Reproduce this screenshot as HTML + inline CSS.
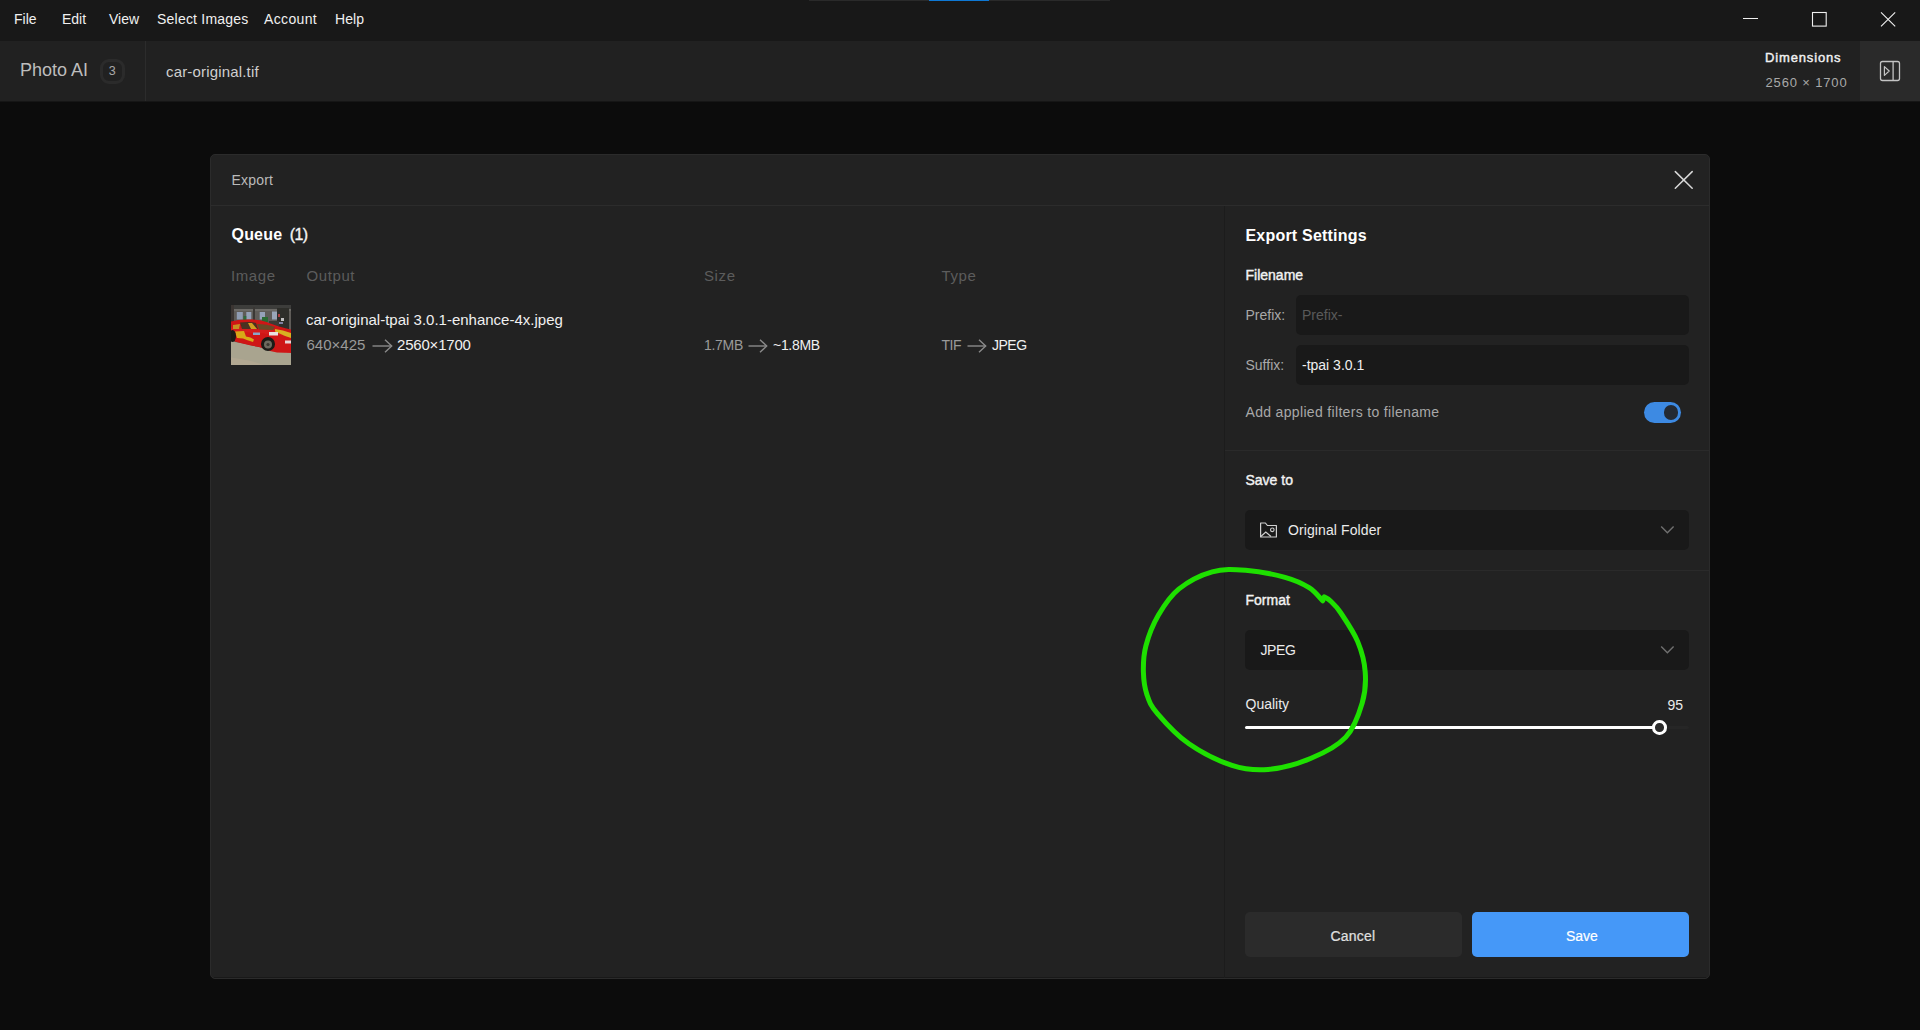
<!DOCTYPE html>
<html><head><meta charset="utf-8">
<style>
*{margin:0;padding:0;box-sizing:border-box}
html,body{width:1920px;height:1030px;overflow:hidden;background:#0c0c0c;font-family:"Liberation Sans",sans-serif;position:relative}
.t{position:absolute;white-space:nowrap;line-height:normal}
.a{position:absolute}
svg{display:block}
</style></head><body>
<div style="position:absolute;left:0;top:0;width:1920px;height:41px;background:#181818"></div>
<div class="t" style="left:14px;top:10.63px;font-size:14px;color:#f0f0f0;">File</div>
<div class="t" style="left:62px;top:10.63px;font-size:14px;color:#f0f0f0;">Edit</div>
<div class="t" style="left:109px;top:10.63px;font-size:14px;color:#f0f0f0;">View</div>
<div class="t" style="left:157px;top:10.63px;font-size:14px;color:#f0f0f0;letter-spacing:0.22px;">Select Images</div>
<div class="t" style="left:264px;top:10.63px;font-size:14px;color:#f0f0f0;letter-spacing:0.35px;">Account</div>
<div class="t" style="left:335px;top:10.63px;font-size:14px;color:#f0f0f0;letter-spacing:0.1px;">Help</div>
<div style="position:absolute;left:809px;top:0;width:301px;height:1px;background:#2a2a2a"></div>
<div style="position:absolute;left:929px;top:0;width:60px;height:1px;background:#0e78d4"></div>
<svg style="position:absolute;left:1740px;top:8px" width="160" height="24" viewBox="1740 8 160 24"><path d="M1743,18.5 H1758" stroke="#f0f0f0" stroke-width="1"/><rect x="1812.5" y="12.5" width="13.7" height="13.6" stroke="#f0f0f0" stroke-width="1.1" fill="none"/><path d="M1881,12.3 L1895.2,26.3 M1895.2,12.3 L1881,26.3" stroke="#f0f0f0" stroke-width="1.1"/></svg>
<div style="position:absolute;left:0;top:41px;width:1920px;height:60px;background:#212121"></div>
<div style="position:absolute;left:0;top:101px;width:1920px;height:1px;background:#161616"></div>
<div class="t" style="left:20px;top:60.41px;font-size:18px;color:#bdbdbd;">Photo AI</div>
<div style="position:absolute;left:100px;top:58.5px;width:25px;height:25.5px;border:3px solid #2b2b2b;border-radius:9px"></div>
<div class="t" style="left:108.8px;top:63.79px;font-size:12.5px;color:#a8a8a8;">3</div>
<div style="position:absolute;left:145px;top:41px;width:1px;height:60px;background:#2c2c2c"></div>
<div class="t" style="left:166px;top:62.67px;font-size:15px;color:#cfcfcf;letter-spacing:0.17px;">car-original.tif</div>
<div class="t" style="left:1765px;top:50.13px;font-size:13px;color:#f2f2f2;-webkit-text-stroke:0.4px #f2f2f2;letter-spacing:0.85px;">Dimensions</div>
<div class="t" style="left:1765.5px;top:75.14px;font-size:13px;color:#a9a9a9;letter-spacing:0.85px;">2560 × 1700</div>
<div style="position:absolute;left:1860px;top:41px;width:60px;height:60px;background:#2a2a2a"></div>
<svg style="position:absolute;left:1876px;top:57px" width="28" height="28" viewBox="1876 57 28 28"><rect x="1880.5" y="61.5" width="19" height="19" rx="2" stroke="#c4c4c4" stroke-width="1.3" fill="none"/><path d="M1893.1,61.5 V80.5" stroke="#c4c4c4" stroke-width="1.3"/><path d="M1884.4,66.6 L1889.2,71 L1884.4,75.4 Z" stroke="#c4c4c4" stroke-width="1.2" fill="none" stroke-linejoin="round"/></svg>
<div style="position:absolute;left:210px;top:154px;width:1500px;height:825px;background:#222222;border:1px solid #2b2b2b;border-radius:5px"></div>
<div style="position:absolute;left:214px;top:977px;width:1492px;height:1px;background:#191919"></div>
<div class="t" style="left:231.5px;top:172.23px;font-size:14px;color:#bababa;letter-spacing:0.2px;">Export</div>
<svg style="position:absolute;left:1670px;top:166px" width="28" height="28" viewBox="1670 166 28 28"><path d="M1675.3,171.6 L1692.2,188.3 M1692.2,171.6 L1675.3,188.3" stroke="#d8d8d8" stroke-width="1.5" stroke-linecap="round"/></svg>
<div style="position:absolute;left:211px;top:205px;width:1498px;height:1px;background:#2c2c2c"></div>
<div style="position:absolute;left:1224px;top:206px;width:1px;height:772px;background:#1c1c1c"></div>
<div class="t" style="left:231.5px;top:225.92px;font-size:16px;color:#ffffff;font-weight:700;letter-spacing:0.2px;">Queue</div>
<div class="t" style="left:289.8px;top:225.92px;font-size:16px;color:#f4f4f4;-webkit-text-stroke:0.35px #f4f4f4;letter-spacing:-0.6px;">(1)</div>
<div class="t" style="left:231px;top:267.43px;font-size:15px;color:#5c5c5c;letter-spacing:0.6px;">Image</div>
<div class="t" style="left:306.5px;top:267.43px;font-size:15px;color:#5c5c5c;letter-spacing:0.6px;">Output</div>
<div class="t" style="left:704px;top:267.43px;font-size:15px;color:#5c5c5c;letter-spacing:0.6px;">Size</div>
<div class="t" style="left:941.5px;top:267.43px;font-size:15px;color:#5c5c5c;letter-spacing:0.6px;">Type</div>
<svg style="position:absolute;left:231px;top:305px" width="60" height="60" viewBox="0 0 60 60"><defs><filter id="bl" x="-5%" y="-5%" width="110%" height="110%"><feGaussianBlur stdDeviation="0.6"/></filter><clipPath id="cp"><rect width="60" height="60"/></clipPath></defs><g clip-path="url(#cp)"><g filter="url(#bl)"><rect x="-2" y="-2" width="64" height="64" fill="#5e5c58"/><rect x="-2" y="-2" width="64" height="6" fill="#3e3c3a"/><rect x="-2" y="4" width="64" height="2" fill="#6c6a66"/><rect x="0" y="0" width="3" height="20" fill="#3a3532"/><rect x="22" y="2" width="2" height="14" fill="#3a3836"/><rect x="5.8" y="7" width="6" height="7.5" fill="#8f9cb2"/><rect x="15.3" y="7" width="5" height="7.5" fill="#95a2b8"/><rect x="28.7" y="7" width="5.3" height="7.5" fill="#95a2b8"/><rect x="41" y="6.5" width="5" height="8" fill="#9aa6b8"/><rect x="12.5" y="11" width="2.8" height="5" fill="#2f6a3a"/><rect x="31" y="12" width="6" height="5" fill="#2a6a30"/><rect x="46" y="3" width="12" height="21" fill="#2e2e2c"/><rect x="47" y="9" width="2" height="3" fill="#b04040"/><rect x="50" y="13" width="3" height="3" fill="#c0c0c0"/><rect x="48" y="17" width="4" height="2" fill="#8080a0"/><rect x="38" y="16" width="10" height="5" fill="#3a3a36"/><path d="M-2,36 L10,38 L30,42.5 L60,47 L62,47 V62 H-2 Z" fill="#a9a48f"/><path d="M-2,52 L20,56 L40,62 H-2 Z" fill="#b2a892"/><path d="M0,16.5 Q8,14 22,14.5 Q32,15 38,18 L48,21.5 Q56,23.5 62,25 V48 L46,47.5 Q40,47 34,44 L28,42 Q12,39 4,36.5 L0,35 Z" fill="#cf1414"/><path d="M0,22 Q20,24 40,25 L62,28 V32 Q40,29 20,28 L0,27 Z" fill="#d82020" opacity="0.6"/><path d="M9,17.5 Q20,16.5 25,18 L27,24 L11,24 Z" fill="#4a3020"/><path d="M17,18 L21,18 L26,24 L20,24 Z" fill="#d0a020"/><path d="M26,19 Q36,19 44,22 L42,25 L28,24.5 Z" fill="#6a4a28"/><path d="M2,20 L9,19 L8,24 L2,24 Z" fill="#c89020"/><path d="M4,26.5 L13,26 L15,31.5 Q20,32 23,34.5 L22,37 Q16,35 12,33.5 L6,33 Z" fill="#d8a818"/><path d="M44,24 Q52,25 60,28 L60,33 L54,31 Q48,28 44,26.5 Z" fill="#d8b020"/><rect x="38" y="27" width="9" height="3.5" fill="#e8e0e0"/><rect x="54" y="35.5" width="6" height="3" fill="#e6d6d6"/><rect x="22" y="27.5" width="7" height="2.5" fill="#8aa6c8"/><circle cx="37" cy="39" r="7" fill="#1c1a18"/><circle cx="37" cy="39.5" r="4" fill="#6e6a5e"/><circle cx="37" cy="39.5" r="1.6" fill="#3a3830"/><ellipse cx="1.5" cy="31" rx="3.5" ry="6" fill="#1c1a18"/></g></g></svg>
<div class="t" style="left:306px;top:311.03px;font-size:15px;color:#f0f0f0;">car-original-tpai 3.0.1-enhance-4x.jpeg</div>
<div class="t" style="left:306.5px;top:336.23px;font-size:15px;color:#9a9a9a;">640×425</div>
<svg class="a" style="left:372px;top:337.5px" width="22" height="16" viewBox="0 0 22 16"><path d="M0.5,8 H19.7" stroke="#8a8a8a" stroke-width="1.4" fill="none"/><path d="M13,1.7 L19.7,8 L13,14.3" stroke="#8a8a8a" stroke-width="1.4" fill="none" stroke-linejoin="miter"/></svg>
<div class="t" style="left:397px;top:336.23px;font-size:15px;color:#f0f0f0;letter-spacing:-0.2px;">2560×1700</div>
<div class="t" style="left:704px;top:337.33px;font-size:14px;color:#9a9a9a;letter-spacing:-0.3px;">1.7MB</div>
<svg class="a" style="left:747.5px;top:337.5px" width="21" height="16" viewBox="0 0 21 16"><path d="M0.5,8 H18.7" stroke="#8a8a8a" stroke-width="1.4" fill="none"/><path d="M12,1.7 L18.7,8 L12,14.3" stroke="#8a8a8a" stroke-width="1.4" fill="none" stroke-linejoin="miter"/></svg>
<div class="t" style="left:773px;top:337.33px;font-size:14px;color:#f0f0f0;letter-spacing:-0.3px;">~1.8MB</div>
<div class="t" style="left:941.5px;top:337.33px;font-size:14px;color:#9a9a9a;letter-spacing:-0.5px;">TIF</div>
<svg class="a" style="left:967px;top:337.5px" width="21" height="16" viewBox="0 0 21 16"><path d="M0.5,8 H18.7" stroke="#8a8a8a" stroke-width="1.4" fill="none"/><path d="M12,1.7 L18.7,8 L12,14.3" stroke="#8a8a8a" stroke-width="1.4" fill="none" stroke-linejoin="miter"/></svg>
<div class="t" style="left:992px;top:337.33px;font-size:14px;color:#f0f0f0;letter-spacing:-0.5px;">JPEG</div>
<div class="t" style="left:1245.5px;top:226.52px;font-size:16px;color:#ffffff;font-weight:700;letter-spacing:0.2px;">Export Settings</div>
<div class="t" style="left:1245.5px;top:267.03px;font-size:14px;color:#f2f2f2;-webkit-text-stroke:0.4px #f2f2f2;">Filename</div>
<div class="t" style="left:1245.5px;top:307.03px;font-size:14px;color:#a8a8a8;">Prefix:</div>
<div style="position:absolute;left:1296px;top:295px;width:393px;height:40px;background:#191919;border-radius:5px"></div>
<div class="t" style="left:1302px;top:307.03px;font-size:14px;color:#5a5a5a;">Prefix-</div>
<div class="t" style="left:1245.5px;top:356.83px;font-size:14px;color:#a8a8a8;">Suffix:</div>
<div style="position:absolute;left:1296px;top:345px;width:393px;height:40px;background:#191919;border-radius:5px"></div>
<div class="t" style="left:1302px;top:356.83px;font-size:14px;color:#f0f0f0;">-tpai 3.0.1</div>
<div class="t" style="left:1245.5px;top:404.23px;font-size:14px;color:#a8a8a8;letter-spacing:0.33px;">Add applied filters to filename</div>
<div style="position:absolute;left:1643.7px;top:402.2px;width:37.5px;height:20.5px;background:#3d8ae3;border-radius:11px"></div>
<div style="position:absolute;left:1664px;top:405.3px;width:14.3px;height:14.3px;background:#232a34;border-radius:50%"></div>
<div style="position:absolute;left:1225px;top:450px;width:484px;height:1px;background:#2a2a2a"></div>
<div class="t" style="left:1245.5px;top:472.13px;font-size:14px;color:#f2f2f2;-webkit-text-stroke:0.4px #f2f2f2;">Save to</div>
<div style="position:absolute;left:1245px;top:510px;width:444px;height:40px;background:#191919;border-radius:5px"></div>
<svg style="position:absolute;left:1258px;top:520px" width="22" height="20" viewBox="1258 520 22 20"><path d="M1260.6,523 H1265.4 L1267.4,525.5 H1276.4 V537 H1260.6 Z" stroke="#d0d0d0" stroke-width="1.2" fill="none" stroke-linejoin="round"/><path d="M1260.8,536.5 L1265.8,532 L1271,536.5" stroke="#d0d0d0" stroke-width="1.2" fill="none"/><circle cx="1272.3" cy="529.8" r="1.8" stroke="#d0d0d0" stroke-width="1.1" fill="none"/></svg>
<div class="t" style="left:1288px;top:522.03px;font-size:14px;color:#ebebeb;letter-spacing:0.1px;">Original Folder</div>
<svg style="position:absolute;left:1658px;top:522px" width="20" height="16" viewBox="1658 522 20 16"><path d="M1661.2,526.5 L1667.4,532.7 L1673.6,526.5" stroke="#707070" stroke-width="1.4" fill="none"/></svg>
<div style="position:absolute;left:1225px;top:570px;width:484px;height:1px;background:#2a2a2a"></div>
<div class="t" style="left:1245.5px;top:592.23px;font-size:14px;color:#f2f2f2;-webkit-text-stroke:0.4px #f2f2f2;">Format</div>
<div style="position:absolute;left:1245px;top:630px;width:444px;height:40px;background:#191919;border-radius:5px"></div>
<div class="t" style="left:1260.5px;top:642.03px;font-size:14px;color:#ebebeb;letter-spacing:-0.4px;">JPEG</div>
<svg style="position:absolute;left:1658px;top:642px" width="20" height="16" viewBox="1658 642 20 16"><path d="M1661.2,646.5 L1667.4,652.7 L1673.6,646.5" stroke="#707070" stroke-width="1.4" fill="none"/></svg>
<div class="t" style="left:1245.5px;top:696.43px;font-size:14px;color:#ebebeb;">Quality</div>
<div class="t" style="left:1667.5px;top:697.23px;font-size:14px;color:#ebebeb;">95</div>
<div style="position:absolute;left:1659px;top:726px;width:30px;height:3px;background:#262626;border-radius:2px"></div>
<div style="position:absolute;left:1245px;top:726px;width:415px;height:3px;background:#ffffff;border-radius:2px"></div>
<div style="position:absolute;left:1652.2px;top:720.1px;width:14.6px;height:14.6px;background:#2b2b2b;border:3px solid #ffffff;border-radius:50%"></div>
<div style="position:absolute;left:1245px;top:912px;width:217px;height:45px;background:#2b2b2b;border-radius:5px"></div>
<div class="t" style="left:1330.5px;top:927.53px;font-size:14px;color:#e0e0e0;-webkit-text-stroke:0.2px #e0e0e0;letter-spacing:0.2px;">Cancel</div>
<div style="position:absolute;left:1472px;top:912px;width:217px;height:45px;background:#4598f8;border-radius:5px"></div>
<div class="t" style="left:1566px;top:927.53px;font-size:14px;color:#ffffff;-webkit-text-stroke:0.2px #ffffff;">Save</div>
<svg style="position:absolute;left:0;top:0" width="1920" height="1030" viewBox="0 0 1920 1030"><path d="M1322.7,600.8 C1320.4,598.6 1315.4,591.5 1309.1,587.6 C1302.8,583.7 1295.6,580.2 1285.0,577.3 C1274.4,574.4 1257.8,571.1 1245.7,570.2 C1233.6,569.3 1223.4,568.6 1212.2,571.8 C1201.0,574.9 1187.7,581.9 1178.7,589.1 C1169.7,596.4 1163.8,605.8 1158.3,615.3 C1152.8,624.8 1148.4,636.4 1145.9,645.9 C1143.4,655.4 1143.2,663.8 1143.4,672.0 C1143.6,680.2 1144.7,688.0 1147.0,694.9 C1149.3,701.8 1150.5,705.5 1157.5,713.6 C1164.5,721.8 1176.5,735.2 1188.9,743.8 C1201.3,752.4 1218.8,761.1 1232.0,765.4 C1245.2,769.7 1255.0,770.6 1268.1,769.5 C1281.2,768.4 1297.5,763.9 1310.5,758.5 C1323.5,753.1 1337.2,746.4 1345.8,737.1 C1354.4,727.9 1359.0,713.9 1362.2,703.0 C1365.4,692.1 1366.0,682.2 1365.2,672.0 C1364.5,661.8 1361.8,651.5 1357.7,641.6 C1353.6,631.7 1345.0,619.3 1340.5,612.5 C1336.0,605.7 1333.2,603.6 1330.5,601.0 C1327.8,598.4 1325.2,597.6 1324.2,596.9" stroke="#1ee000" stroke-width="5" fill="none" stroke-linecap="round" stroke-linejoin="round"/></svg>
</body></html>
